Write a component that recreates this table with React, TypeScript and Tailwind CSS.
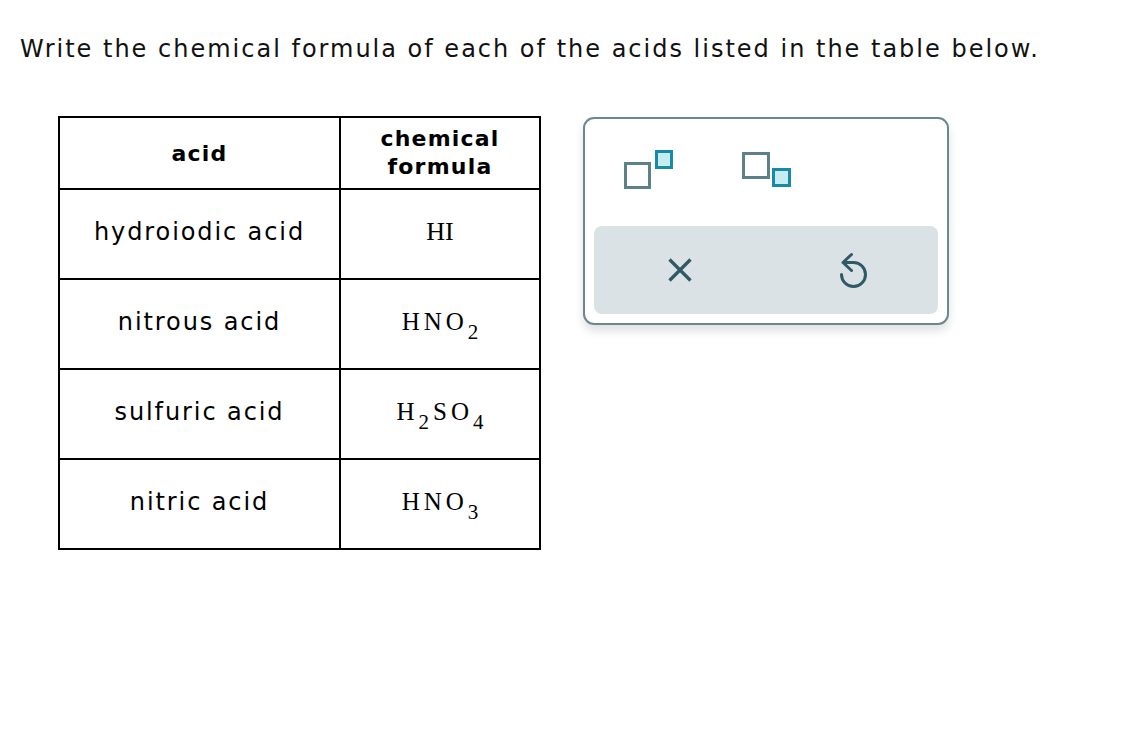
import React from "react";

const sans = { fontFamily: '"DejaVu Sans", Verdana, sans-serif' };
const serif = { fontFamily: '"Liberation Serif", "Times New Roman", serif' };

function Sub({ children }: { children: React.ReactNode }) {
  return (
    <span className="relative top-[9px] text-[21px]" style={{ letterSpacing: 0 }}>
      {children}
    </span>
  );
}

function Formula({ children }: { children: React.ReactNode }) {
  return (
    <span className="relative -top-[2px] text-[25px] leading-none text-black tracking-[4px]" style={serif}>
      {children}
    </span>
  );
}

const rows: { name: string; formula: React.ReactNode }[] = [
  {
    name: "hydroiodic acid",
    formula: (
      <span className="relative -top-[1px] text-[26px] leading-none text-black" style={serif}>
        HI
      </span>
    ),
  },
  {
    name: "nitrous acid",
    formula: (
      <Formula>
        HNO<Sub>2</Sub>
      </Formula>
    ),
  },
  {
    name: "sulfuric acid",
    formula: (
      <Formula>
        H<Sub>2</Sub>
        <span className="ml-[4px]">S</span>O<Sub>4</Sub>
      </Formula>
    ),
  },
  {
    name: "nitric acid",
    formula: (
      <Formula>
        HNO<Sub>3</Sub>
      </Formula>
    ),
  },
];

export default function App() {
  return (
    <div className="min-h-[750px] w-[1124px] bg-white text-black" style={sans}>
      <div className="pl-[20px] pt-[35px] text-[24px] leading-[29px] tracking-[2px] text-[#111]">
        Write the chemical formula of each of the acids listed in the table below.
      </div>

      <div className="mt-[52px] flex items-start pl-[58px]">
        <div className="w-[483px] border-2 border-black">
          <div className="flex h-[72px] border-b-2 border-black">
            <div className="flex w-[281px] items-center justify-center border-r-2 border-black text-[22px] font-bold tracking-[1.2px]">
              acid
            </div>
            <div className="flex flex-1 items-center justify-center text-center text-[22px] font-bold leading-[28px] tracking-[1.2px]">
              chemical
              <br />
              formula
            </div>
          </div>
          {rows.map((r, i) => (
            <div
              key={r.name}
              className={
                i < rows.length - 1
                  ? "flex h-[90px] border-b-2 border-black"
                  : "flex h-[88px]"
              }
            >
              <div className="flex w-[281px] items-center justify-center border-r-2 border-black pb-[4px] text-[24px] tracking-[1.9px]">
                {r.name}
              </div>
              <div className="flex flex-1 items-center justify-center pb-[2px]">
                {r.formula}
              </div>
            </div>
          ))}
        </div>

        <div className="ml-[42px] mt-[1px] flex h-[208px] w-[366px] flex-col rounded-[11px] border-2 border-[#6a8890] bg-white shadow-[0_6px_10px_rgba(0,0,0,0.12)]">
          <div className="flex h-[107px] items-start pl-[39px] pt-[31px]">
            <svg width="49" height="39" viewBox="0 0 49 39">
              <rect x="1.5" y="13.5" width="24" height="24" fill="white" stroke="#5e8088" strokeWidth="3" />
              <rect x="32.5" y="1.5" width="15" height="16" fill="#c6ecf3" stroke="#178ba6" strokeWidth="3" />
            </svg>
            <svg className="ml-[69px] mt-[2px]" width="49" height="36" viewBox="0 0 49 36">
              <rect x="1.5" y="1.5" width="25" height="24" fill="white" stroke="#5e8088" strokeWidth="3" />
              <rect x="31.5" y="17.5" width="16" height="16" fill="#c6ecf3" stroke="#178ba6" strokeWidth="3" />
            </svg>
          </div>
          <div className="mx-[9px] flex h-[88px] rounded-[8px] bg-[#dae2e5]">
            <div className="flex w-1/2 items-center justify-center">
              <svg width="24" height="24" viewBox="0 0 24 24">
                <path d="M1.5 1.5 L22.5 22.5 M22.5 1.5 L1.5 22.5" stroke="#2f5965" strokeWidth="3.2" strokeLinecap="butt" fill="none" />
              </svg>
            </div>
            <div className="flex w-1/2 items-center justify-center">
              <svg width="32" height="40" viewBox="0 0 32 40">
                <path
                  d="M15.5 4.5 L7 12.5 L15.5 20.5 M7 12.5 L17.5 12.5 A12 12 0 1 1 5.5 24.5"
                  stroke="#2f5965"
                  strokeWidth="3"
                  strokeLinecap="round"
                  strokeLinejoin="round"
                  fill="none"
                />
              </svg>
            </div>
          </div>
        </div>
      </div>
    </div>
  );
}
